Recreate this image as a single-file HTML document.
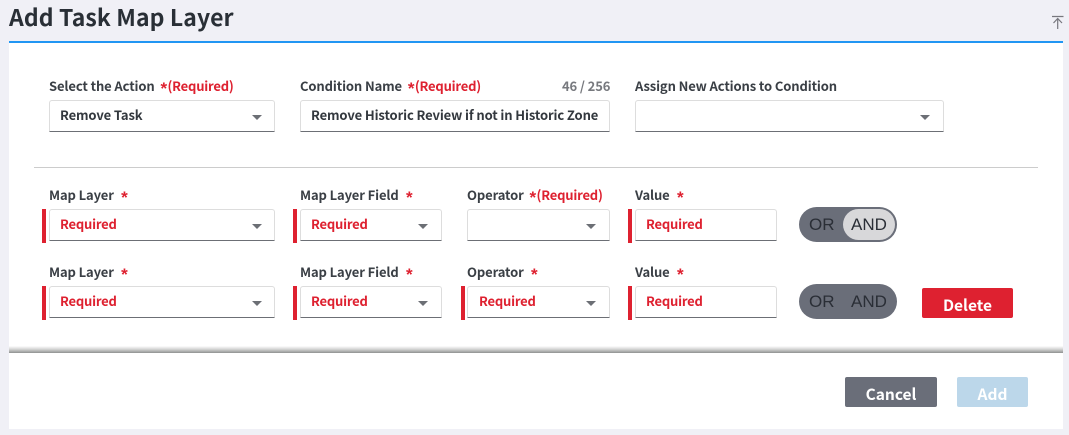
<!DOCTYPE html>
<html><head><meta charset="utf-8">
<style>
html,body{margin:0;padding:0;width:1069px;height:435px;overflow:hidden;background:#f0f0f6}
body{position:relative;font-family:"Noto Sans CJK JP","Liberation Sans",sans-serif;color:#33383e}
div,span{position:absolute;box-sizing:border-box;white-space:nowrap}
.title{left:9px;top:0;font-size:23px;font-weight:700;line-height:32px;color:#292f36;letter-spacing:.1px}
.blue{left:9px;top:41px;width:1054px;height:2px;background:#2196f3}
.panel{left:9px;top:43px;width:1054px;height:386px;background:#fff}
.lb{font-size:13px;font-weight:700;line-height:18px;color:#3a3f45;letter-spacing:-.12px}
.lb b{color:#de2130;font-weight:700;position:static;letter-spacing:-.2px}
.lb i{display:inline-block;width:7.5px;margin-left:2.5px;font:bold 17px/12px "Liberation Sans",sans-serif;color:#de2130;position:relative;top:3px;text-align:center}
.lb i:last-child{margin-left:4px}
.f{height:32px;background:#fff;border:1px solid #ddd;border-bottom:1px solid #6c6f75;border-radius:3px 3px 0 0}
.t{font-size:13px;font-weight:700;line-height:18px;letter-spacing:-.12px;color:#33383e}
.t.r{color:#de2130;letter-spacing:-.2px}
.bar{width:4px;height:34px;background:#de2130}
.c{width:0;height:0;border-left:5px solid transparent;border-right:5px solid transparent;border-top:5px solid #6c6f75}
.hr{left:34px;top:167px;width:1004px;height:1px;background:#ccc}
.tg{left:799px;width:98px;height:35px;border-radius:18px;background:#6a6e79}
.kn{left:843px;width:52px;height:31px;border-radius:16px;background:#d8d8da}
.tt{font-size:17px;line-height:24px;color:#2a2e36;font-family:"Liberation Sans",sans-serif}
.sh{left:9px;top:346px;width:1054px;height:7px;background:linear-gradient(#fff,#d5d6d5 45%,#a9abaa 80%,#8f9190)}
.btn{height:30px;border-radius:2px;color:#fff;font-size:15.5px;font-weight:700;text-align:center;line-height:34px}
</style></head><body>
<div class="title">Add Task Map Layer</div>
<svg style="position:absolute;left:1051px;top:15px" width="13" height="15" viewBox="0 0 13 15" fill="none" stroke="#77777e" stroke-width="1.2"><path d="M1 1.5H12.5M6.7 14V3.5M2.5 8L6.7 3.5L11 8"/></svg>
<div class="panel"></div>
<div class="blue"></div>

<div class="lb" style="left:49px;top:77px">Select the Action <i>*</i><b>(Required)</b></div>
<div class="f" style="left:49px;top:100px;width:226px"></div>
<div class="t" style="left:60px;top:106px">Remove Task</div>
<div class="c" style="left:252px;top:115px"></div>

<div class="lb" style="left:300px;top:77px">Condition Name <i>*</i><b>(Required)</b></div>
<div class="lb" style="left:562px;top:77px;color:#77797e">46 / 256</div>
<div class="f" style="left:300px;top:100px;width:310px"></div>
<div class="t" style="left:311px;top:106px">Remove Historic Review if not in Historic Zone</div>

<div class="lb" style="left:635px;top:77px">Assign New Actions to Condition</div>
<div class="f" style="left:635px;top:100px;width:309px"></div>
<div class="c" style="left:920px;top:115px"></div>

<div class="hr"></div>

<div class="lb" style="left:49px;top:186px">Map Layer <i>*</i></div>
<div class="bar" style="left:42px;top:209px"></div>
<div class="f" style="left:49px;top:209px;width:226px"></div>
<div class="t r" style="left:60px;top:215px">Required</div>
<div class="c" style="left:252px;top:224px"></div>

<div class="lb" style="left:300px;top:186px">Map Layer Field <i>*</i></div>
<div class="bar" style="left:293px;top:209px"></div>
<div class="f" style="left:300px;top:209px;width:142px"></div>
<div class="t r" style="left:311px;top:215px">Required</div>
<div class="c" style="left:418px;top:224px"></div>

<div class="lb" style="left:467px;top:186px">Operator <i>*</i><b>(Required)</b></div>
<div class="f" style="left:467px;top:209px;width:143px"></div>
<div class="c" style="left:586px;top:224px"></div>

<div class="lb" style="left:635px;top:186px">Value <i>*</i></div>
<div class="bar" style="left:628px;top:209px"></div>
<div class="f" style="left:635px;top:209px;width:142px"></div>
<div class="t r" style="left:646px;top:215px">Required</div>

<div class="tg" style="top:207px"></div>
<div class="kn" style="top:209px"></div>
<div class="tt" style="left:809px;top:213px">OR</div>
<div class="tt" style="left:851px;top:213px">AND</div>

<div class="lb" style="left:49px;top:263px">Map Layer <i>*</i></div>
<div class="bar" style="left:42px;top:286px"></div>
<div class="f" style="left:49px;top:286px;width:226px"></div>
<div class="t r" style="left:60px;top:292px">Required</div>
<div class="c" style="left:252px;top:301px"></div>

<div class="lb" style="left:300px;top:263px">Map Layer Field <i>*</i></div>
<div class="bar" style="left:293px;top:286px"></div>
<div class="f" style="left:300px;top:286px;width:142px"></div>
<div class="t r" style="left:311px;top:292px">Required</div>
<div class="c" style="left:418px;top:301px"></div>

<div class="lb" style="left:467px;top:263px">Operator <i>*</i></div>
<div class="bar" style="left:461px;top:286px"></div>
<div class="f" style="left:467px;top:286px;width:143px"></div>
<div class="t r" style="left:479px;top:292px">Required</div>
<div class="c" style="left:586px;top:301px"></div>

<div class="lb" style="left:635px;top:263px">Value <i>*</i></div>
<div class="bar" style="left:628px;top:286px"></div>
<div class="f" style="left:635px;top:286px;width:142px"></div>
<div class="t r" style="left:646px;top:292px">Required</div>

<div class="tg" style="top:284px"></div>
<div class="tt" style="left:809px;top:290px">OR</div>
<div class="tt" style="left:851px;top:290px">AND</div>

<div class="btn" style="left:922px;top:288px;width:91px;background:#de2130">Delete</div>

<div class="sh"></div>
<div class="btn" style="left:845px;top:377px;width:92px;background:#6a6e79">Cancel</div>
<div class="btn" style="left:957px;top:377px;width:71px;background:#bcd7ea">Add</div>
</body></html>
